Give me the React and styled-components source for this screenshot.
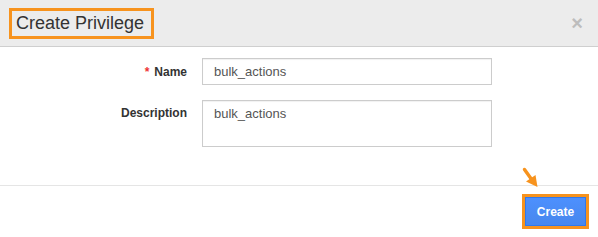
import React from "react";
import styled, { createGlobalStyle } from "styled-components";

const Global = createGlobalStyle`
  html, body { margin: 0; padding: 0; background: #fff; }
  body { font-family: "Liberation Sans", Arial, sans-serif; }
`;

const Modal = styled.div`
  width: 598px;
  height: 237px;
  background: #fff;
  position: relative;
  overflow: hidden;
`;

const Header = styled.div`
  height: 47px;
  box-sizing: border-box;
  background: #ececec;
  border-bottom: 1px solid #cfcfcf;
  display: flex;
  align-items: center;
  justify-content: space-between;
  padding: 0 15px 2px 9px;
`;

const Title = styled.h4`
  margin: 0;
  border: 3px solid #f7931e;
  height: 31px;
  width: 145px;
  box-sizing: border-box;
  padding: 0 0 0 4px;
  font-size: 18px;
  font-weight: normal;
  color: #333;
  line-height: 25px;
  margin-top: 2px;
  white-space: nowrap;
`;

const Close = styled.span`
  font-size: 20px;
  font-weight: bold;
  color: #bdbdbd;
  line-height: 1;
  margin-top: 1px;
`;

const Body = styled.div`
  padding: 11px 0 0 0;
  height: 139px;
  box-sizing: border-box;
  border-bottom: 1px solid #e5e5e5;
`;

const Form = styled.div`
  display: grid;
  grid-template-columns: 187px 290px;
  column-gap: 15px;
  row-gap: 15px;
`;

const Label = styled.label`
  text-align: right;
  font-weight: bold;
  font-size: 12px;
  color: #333;
  padding-top: ${(p) => p.$top}px;
`;

const Star = styled.span`
  color: #e33;
  margin-right: 5px;
  font-size: 12px;
`;

const Input = styled.div`
  box-sizing: border-box;
  border: 1px solid #ccc;
  box-shadow: inset 0 1px 1px rgba(0,0,0,0.06);
  font-size: 13px;
  color: #555;
  padding: ${(p) => (p.$area ? "5px 11px" : "0 11px")};
  line-height: ${(p) => (p.$area ? "15px" : "25px")};
  height: ${(p) => (p.$area ? "47px" : "27px")};
`;

const Footer = styled.div`
  display: flex;
  justify-content: flex-end;
  padding: 8px 9px 0 0;
`;

const ButtonFrame = styled.div`
  border: 3px solid #f7931e;
  box-sizing: border-box;
  width: 67px;
  height: 35px;
`;

const Button = styled.button`
  width: 100%;
  height: 100%;
  border: 1px solid #3079ed;
  background: linear-gradient(#4d90fe, #4787ed);
  color: #fff;
  font-family: "Liberation Sans", Arial, sans-serif;
  font-weight: bold;
  font-size: 12px;
  padding: 0;
  margin: 0;
`;

const Arrow = styled.svg`
  position: absolute;
  left: 515px;
  top: 163px;
`;

export default function App() {
  return (
    <>
      <Global />
      <Modal>
        <Header>
          <Title>Create Privilege</Title>
          <Close>×</Close>
        </Header>
        <Body>
          <Form>
            <Label $top={7}>
              <Star>*</Star>Name
            </Label>
            <Input>bulk_actions</Input>
            <Label $top={6}>Description</Label>
            <Input $area>bulk_actions</Input>
          </Form>
        </Body>
        <Footer>
          <ButtonFrame>
            <Button>Create</Button>
          </ButtonFrame>
        </Footer>
        <Arrow width="26" height="28" viewBox="0 0 26 28">
          <path d="M9.5 6.5 L17 17" stroke="#f7931e" strokeWidth="3.4" strokeLinecap="round" fill="none" />
          <path d="M11 18.5 L20.5 12 L22.5 24 Z" fill="#f7931e" />
        </Arrow>
      </Modal>
    </>
  );
}
